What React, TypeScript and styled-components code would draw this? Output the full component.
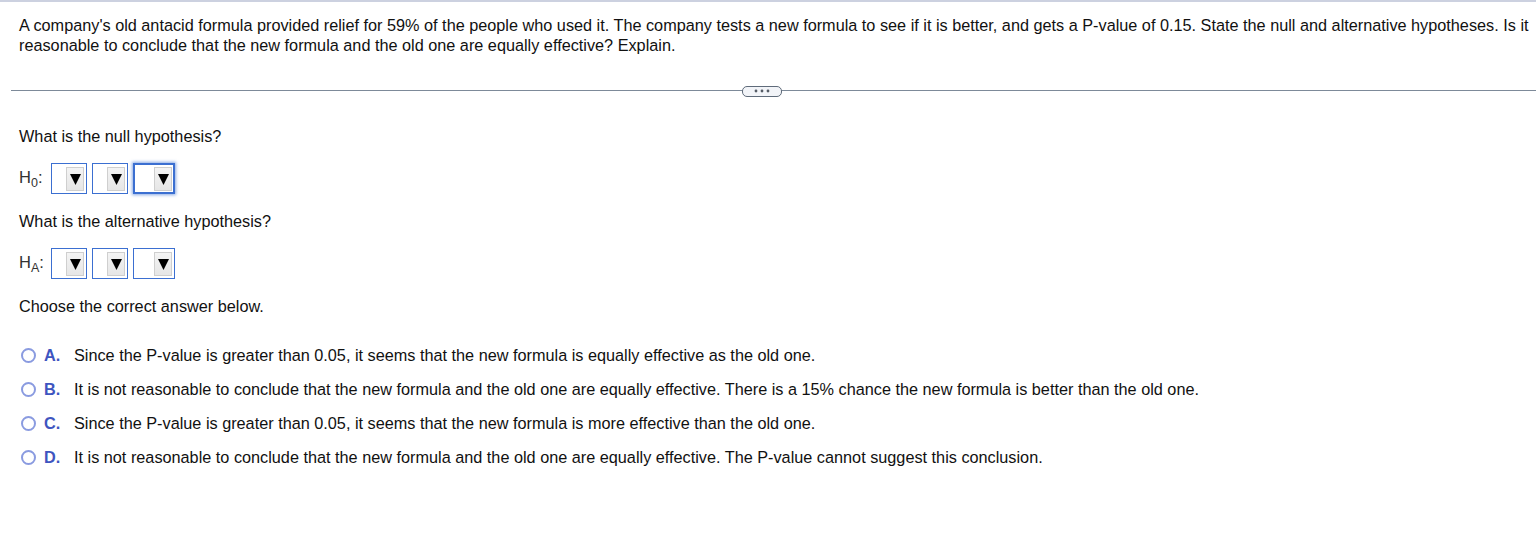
import styled, { createGlobalStyle } from "styled-components";

const GlobalStyle = createGlobalStyle`
  html, body {
    margin: 0;
    padding: 0;
    background: #ffffff;
  }
  body {
    font-family: Arial, "Liberation Sans", sans-serif;
    font-size: 16.25px;
    color: #111111;
  }
`;

const OPTIONS = [
  {
    letter: "A.",
    text: "Since the P-value is greater than 0.05, it seems that the new formula is equally effective as the old one.",
  },
  {
    letter: "B.",
    text: "It is not reasonable to conclude that the new formula and the old one are equally effective. There is a 15% chance the new formula is better than the old one.",
  },
  {
    letter: "C.",
    text: "Since the P-value is greater than 0.05, it seems that the new formula is more effective than the old one.",
  },
  {
    letter: "D.",
    text: "It is not reasonable to conclude that the new formula and the old one are equally effective. The P-value cannot suggest this conclusion.",
  },
];

const Select = ({ wide, focused }: { wide?: boolean; focused?: boolean }) => (
  <SelectBox $wide={wide} $focused={focused}>
    <Arrow>
      <svg width="11" height="12" viewBox="0 0 11 12">
        <polygon points="0,1 11,1 5.5,12" fill="#000" />
      </svg>
    </Arrow>
  </SelectBox>
);

const App = () => {
  return (
    <>
      <GlobalStyle />
      <Page>
        <Question>
          A company's old antacid formula provided relief for 59% of the people who used it. The company tests a new
          formula to see if it is better, and gets a P-value of 0.15. State the null and alternative hypotheses. Is it
          reasonable to conclude that the new formula and the old one are equally effective? Explain.
        </Question>
        <Divider>
          <Pill>
            <svg width="18" height="4" viewBox="0 0 18 4">
              <circle cx="3" cy="2" r="1.4" fill="#555c66" />
              <circle cx="9" cy="2" r="1.4" fill="#555c66" />
              <circle cx="15" cy="2" r="1.4" fill="#555c66" />
            </svg>
          </Pill>
        </Divider>
        <Body>
          <Prompt>What is the null hypothesis?</Prompt>
          <HypRow>
            <Label>
              H<Sub>0</Sub>:
            </Label>
            <Select />
            <Select />
            <Select wide focused />
          </HypRow>
          <Prompt>What is the alternative hypothesis?</Prompt>
          <HypRow>
            <Label>
              H<Sub>A</Sub>:
            </Label>
            <Select />
            <Select />
            <Select wide />
          </HypRow>
          <Prompt>Choose the correct answer below.</Prompt>
          <Options>
            {OPTIONS.map((o) => (
              <Option key={o.letter}>
                <Radio />
                <Letter>{o.letter}</Letter>
                <span>{o.text}</span>
              </Option>
            ))}
          </Options>
        </Body>
      </Page>
    </>
  );
};

const Page = styled.div`
  width: 1536px;
  height: 546px;
  border-top: 2px solid #ccd1e0;
  box-sizing: border-box;
  overflow: hidden;
`;

const Question = styled.p`
  margin: 0;
  padding: 13px 0 0 19px;
  line-height: 20px;
`;

const Divider = styled.div`
  margin: 31px 0 0 11px;
  height: 10px;
  display: flex;
  align-items: center;
  justify-content: center;
  position: relative;
  &::before {
    content: "";
    position: absolute;
    left: 0;
    right: 0;
    top: 4px;
    height: 1px;
    background: #7d8a99;
  }
`;

const Pill = styled.div`
  position: relative;
  width: 38px;
  height: 9px;
  border: 1px solid #5f6b7a;
  border-radius: 5px;
  background: #f2f4f8;
  display: flex;
  align-items: center;
  justify-content: center;
  margin-left: -23px;
`;

const Body = styled.div`
  padding: 30px 0 0 19px;
`;

const Prompt = styled.div`
  line-height: 20px;
  margin-bottom: 17px;
`;

const HypRow = styled.div`
  display: flex;
  align-items: center;
  gap: 5px;
  margin-bottom: 17px;
  height: 31px;
`;

const Label = styled.span`
  font-size: 16.5px;
  color: #333;
  margin-right: 3px;
  width: 24px;
`;

const Sub = styled.sub`
  font-size: 12.5px;
  vertical-align: -4px;
`;

const SelectBox = styled.div<{ $wide?: boolean; $focused?: boolean }>`
  width: ${(p) => (p.$wide ? 42 : 36)}px;
  height: 31px;
  box-sizing: border-box;
  border: 1px solid #3b6fd1;
  border-width: ${(p) => (p.$focused ? 2 : 1)}px;
  box-shadow: ${(p) => (p.$focused ? "0 0 3px 1px rgba(59,111,209,0.6)" : "none")};
  background: #fff;
  display: flex;
  align-items: center;
  justify-content: flex-end;
  padding-right: ${(p) => (p.$focused ? 1 : 2)}px;
`;

const Arrow = styled.div`
  width: 18px;
  height: 24px;
  box-sizing: border-box;
  border: 1px solid #cfcfcf;
  background: linear-gradient(#f4f4f4, #e6e6e6);
  display: flex;
  align-items: center;
  justify-content: center;
`;

const Options = styled.div`
  margin-top: 29px;
  display: flex;
  flex-direction: column;
  gap: 14px;
`;

const Option = styled.div`
  display: flex;
  align-items: center;
  height: 20px;
`;

const Radio = styled.span`
  width: 15px;
  height: 15px;
  border: 2px solid #8a9be0;
  border-radius: 50%;
  margin-left: 2px;
  margin-right: 8px;
  box-sizing: border-box;
`;

const Letter = styled.span`
  font-weight: bold;
  color: #3e55c0;
  width: 30px;
`;

export default App;
